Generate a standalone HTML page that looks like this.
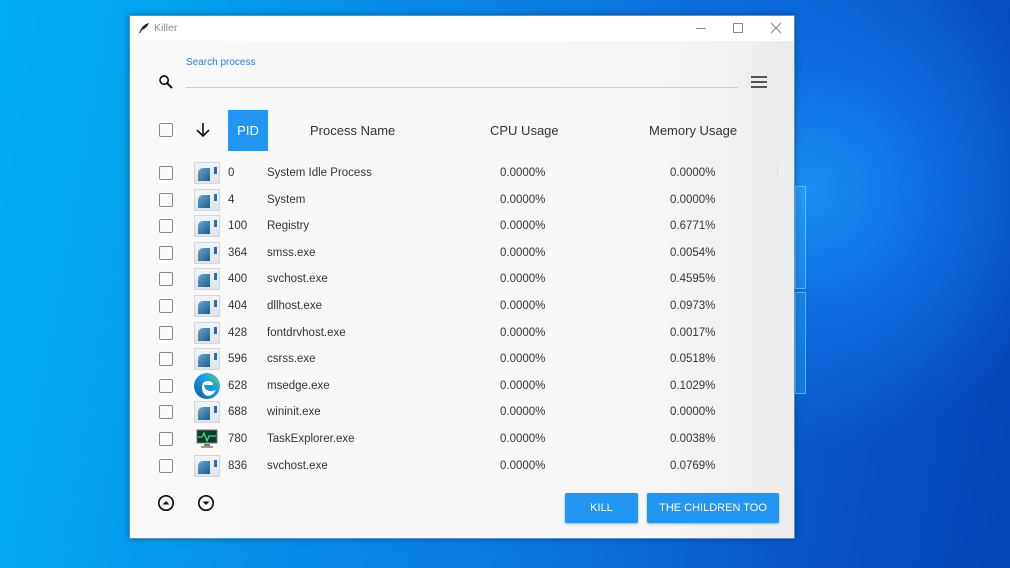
<!DOCTYPE html>
<html><head><meta charset="utf-8"><style>
*{margin:0;padding:0;box-sizing:border-box}
body{width:1010px;height:568px;overflow:hidden;position:relative;font-family:"Liberation Sans",Roboto,sans-serif;
background:radial-gradient(circle at 810px 190px,#1a8ef5 0,#0e6ce0 120px,rgba(10,80,200,0) 260px),linear-gradient(100deg,#00aef5 0%,#04a4f0 14%,#0b6fdc 62%,#0a56c8 80%,#0445b5 100%);}
.a{position:absolute}
.win{left:129px;top:15px;width:666px;height:524px;background:linear-gradient(90deg,#f9f9f9 0%,#f7f7f7 80%,#ececec 100%);box-shadow:0 0 6px rgba(0,0,0,.35);border:1px solid #5a8fd0}
.tb{left:0;top:0;width:664px;height:25px;background:#fff}
.t{color:#333;font-size:11.5px;white-space:nowrap}
.cb{width:14px;height:14px;border:1.6px solid #888;border-radius:2px}
.ic{width:26px;height:22px;background:linear-gradient(#f2f5f8,#dfe5ea);border:1px solid #cfd6dc}
.ic:before{content:"";position:absolute;left:3px;top:5px;width:12px;height:13px;background:linear-gradient(135deg,#6aa6cf,#1d5f8e);border-radius:5px 0 0 0}
.ic:after{content:"";position:absolute;left:19px;top:4px;width:3px;height:7px;background:#2a6fa8}
.btn{background:#2196f3;color:#fff;font-size:11px;text-align:center;line-height:30px;height:30px;border-radius:2px;box-shadow:0 1px 2px rgba(0,0,0,.3)}
.pane{background:rgba(60,190,255,.25);border:1px solid rgba(120,220,255,.6)}
</style></head><body>
<div class="a pane" style="left:795px;top:186px;width:11px;height:103px"></div>
<div class="a pane" style="left:795px;top:292px;width:11px;height:102px"></div>
<div class="a win">
<div class="a tb">
<svg class="a" style="left:8px;top:6px" width="12" height="12" viewBox="0 0 12 12"><path d="M1 11 L3 7 Q6 2 11 1 Q9 6 4 8 L2 11Z" fill="#222"/></svg>
<div class="a" style="left:24px;top:6px;font-size:10.5px;color:#888">Killer</div>
<div class="a" style="left:566px;top:12px;width:10px;height:1px;background:#888"></div>
<div class="a" style="left:603px;top:7px;width:10px;height:10px;border:1px solid #888"></div>
<svg class="a" style="left:640px;top:6px" width="12" height="12"><path d="M1 1L11 11M11 1L1 11" stroke="#888" stroke-width="1.1"/></svg>
</div>
<svg class="a" style="left:27px;top:57px" width="18" height="18" viewBox="0 0 24 24"><circle cx="9.5" cy="9.5" r="5.5" fill="none" stroke="#111" stroke-width="2.2"/><path d="M13.5 13.5L20 20" stroke="#111" stroke-width="2.6"/></svg>
<div class="a" style="left:56px;top:41px;font-size:10px;color:#2a7de1">Search process</div>
<div class="a" style="left:56px;top:71px;width:552px;height:1px;background:#ccc"></div>
<svg class="a" style="left:620px;top:58px" width="18" height="16"><path d="M1 3H17M1 8H17M1 13H17" stroke="#222" stroke-width="1.6"/></svg>
<div class="a cb" style="left:29px;top:107px"></div>
<svg class="a" style="left:65px;top:106px" width="16" height="16" viewBox="0 0 16 16"><path d="M8 1V14M2 8L8 14L14 8" fill="none" stroke="#111" stroke-width="1.6"/></svg>
<div class="a" style="left:98px;top:94px;width:40px;height:41px;background:#2196f3;color:#fff;font-size:13px;line-height:41px;text-align:center">PID</div>
<div class="a" style="left:180px;top:107px;font-size:13px;color:#333">Process Name</div>
<div class="a" style="left:360px;top:107px;font-size:13px;color:#333">CPU Usage</div>
<div class="a" style="left:519px;top:107px;font-size:13px;color:#333">Memory Usage</div>
<div class="a" style="left:647px;top:145px;width:1px;height:16px;background:#ddd"></div>
<div id="rows"></div>
<svg class="a" style="left:27px;top:478px" width="18" height="18" viewBox="0 0 18 18"><circle cx="9" cy="9" r="7.2" fill="none" stroke="#111" stroke-width="1.7"/><path d="M5.5 10.5L9 7L12.5 10.5Z" fill="#111"/></svg>
<svg class="a" style="left:67px;top:478px" width="18" height="18" viewBox="0 0 18 18"><circle cx="9" cy="9" r="7.2" fill="none" stroke="#111" stroke-width="1.7"/><path d="M5.5 7.5L9 11L12.5 7.5Z" fill="#111"/></svg>
<div class="a btn" style="left:435px;top:477px;width:73px">KILL</div>
<div class="a btn" style="left:517px;top:477px;width:132px">THE CHILDREN TOO</div>
</div>
<script>
var d=[["0","System Idle Process","0.0000%"],["4","System","0.0000%"],["100","Registry","0.6771%"],["364","smss.exe","0.0054%"],["400","svchost.exe","0.4595%"],["404","dllhost.exe","0.0973%"],["428","fontdrvhost.exe","0.0017%"],["596","csrss.exe","0.0518%"],["628","msedge.exe","0.1029%"],["688","wininit.exe","0.0000%"],["780","TaskExplorer.exe","0.0038%"],["836","svchost.exe","0.0769%"]];
var h="";d.forEach(function(r,i){var y=157+i*26.6;
h+='<div class="a cb" style="left:29px;top:'+(y-7)+'px"></div>';
if(r[0]=="628")h+='<svg class="a" style="left:63px;top:'+(y-14)+'px" width="28" height="28" viewBox="0 0 28 28"><defs><linearGradient id="e" x1="0" y1="1" x2="1" y2="0"><stop offset="0" stop-color="#0c59a4"/><stop offset=".6" stop-color="#1b9de2"/><stop offset="1" stop-color="#5fd36a"/></linearGradient></defs><circle cx="14" cy="14" r="13" fill="url(#e)"/><path d="M9 15Q9 9 15 9Q20 9 20 13L11 13Q12 19 18 19Q21 19 23 18Q20 24 14 24Q9 22 9 15Z" fill="#fff"/></svg>';
else if(r[0]=="780")h+='<svg class="a" style="left:66px;top:'+(y-10)+'px" width="22" height="20"><rect x="1" y="1" width="20" height="13" fill="#0b3b2e" stroke="#777"/><path d="M2 8H6L8 4L11 12L13 7H20" stroke="#3fe07a" fill="none" stroke-width="1.3"/><rect x="8" y="15" width="6" height="2" fill="#777"/><rect x="5" y="17" width="12" height="2" fill="#999"/></svg>';
else h+='<div class="a ic" style="left:64px;top:'+(y-11)+'px"></div>';
h+='<div class="a t" style="left:98px;top:'+(y-6)+'px">'+r[0]+'</div>';
h+='<div class="a t" style="left:137px;top:'+(y-6)+'px">'+r[1]+'</div>';
h+='<div class="a t" style="left:370px;top:'+(y-6)+'px">0.0000%</div>';
h+='<div class="a t" style="left:540px;top:'+(y-6)+'px">'+r[2]+'</div>';});
document.getElementById("rows").outerHTML=h;
</script>
</body></html>
